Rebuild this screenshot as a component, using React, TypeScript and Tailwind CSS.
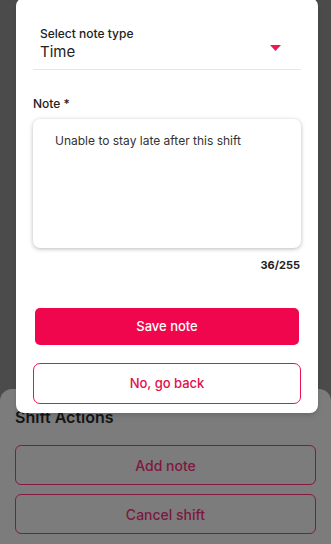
import React from "react";

function Caret() {
  return (
    <svg width="11" height="6" viewBox="0 0 11 6" className="block">
      <path d="M0 0 L11 0 L5.5 6 Z" fill="#ef1852" />
    </svg>
  );
}

export default function App() {
  return (
    <div
      className="relative h-[544px] w-[331px] overflow-hidden bg-[#4b4b4b] flex flex-col"
      style={{ fontFamily: "Inter, 'Noto Sans', sans-serif" }}
    >
      {/* bottom sheet behind the dialog */}
      <div className="mt-auto h-[155px] rounded-t-[12px] bg-[#7c7c7c] px-[15px] pt-[17px]">
        <h3 className="text-[16px] font-semibold leading-[22px] text-[#151515]">Shift Actions</h3>
        <div className="mt-[17px] flex flex-col gap-[9px]">
          <button className="h-[40px] rounded-[6px] border-[1.5px] border-[#851a42] text-[14px] font-medium text-[#7f1740]">
            Add note
          </button>
          <button className="h-[40px] rounded-[6px] border-[1.5px] border-[#851a42] text-[14px] font-medium text-[#7f1740]">
            Cancel shift
          </button>
        </div>
      </div>

      {/* dialog */}
      <div className="absolute left-[16px] top-[-2px] h-[415px] w-[302px] rounded-[8px] bg-white px-[17px] shadow-md">
        <div className="pt-[28px]">
          <div className="flex items-end justify-between border-b border-[#e6e6e6] pb-[7px] pl-[7px] pr-[20px]">
            <div>
              <div className="text-[12px] font-medium leading-[16px] text-[#222]">Select note type</div>
              <div className="text-[15px] leading-[20px] text-[#222]">Time</div>
            </div>
            <div className="mb-[11px]">
              <Caret />
            </div>
          </div>
        </div>

        <div className="mt-[26px] text-[12px] font-medium leading-[16px] text-[#222]">Note *</div>
        <div className="mt-[7px] h-[129px] rounded-[7px] bg-white pl-[22px] pt-[14px] text-[12px] leading-[16px] text-[#333] shadow-[0_1px_4px_rgba(0,0,0,0.28)]">
          Unable to stay late after this shift
        </div>
        <div className="mt-[10px] text-right text-[11px] font-bold leading-[14px] text-[#222] pr-[1px]">36/255</div>

        <button className="mx-[2px] mt-[36px] flex h-[37px] w-[264px] items-center justify-center rounded-[5px] bg-[#f0064c] text-[13px] font-medium text-white">
          Save note
        </button>
        <button className="mt-[18px] flex h-[41px] w-full items-center justify-center rounded-[7px] border-[1.5px] border-[#e8134f] text-[13px] font-medium text-[#e0104c]">
          No, go back
        </button>
      </div>
    </div>
  );
}
